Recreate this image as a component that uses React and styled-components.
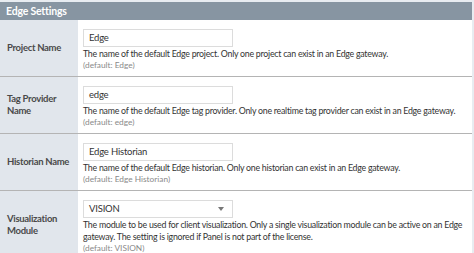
import React from "react";
import styled, { createGlobalStyle } from "styled-components";

const Global = createGlobalStyle`
  html, body { margin: 0; padding: 0; background: #e8ecf1; }
  body { font-family: Lato, "Liberation Sans", sans-serif; }
`;

const Panel = styled.div`
  width: 472px;
  margin-top: 2px;
  background: #fff;
`;

const Header = styled.div`
  height: 18px;
  background: #8795a2;
  color: #fff;
  font-weight: 700;
  font-size: 10.5px;
  line-height: 18px;
  padding-left: 6px;
  letter-spacing: -0.2px;
`;

const Row = styled.div`
  display: grid;
  grid-template-columns: 78px 1fr;
  border-top: ${(p) => (p.$first ? "none" : "1px solid #b4b4b4")};
`;

const Label = styled.div`
  background: #e1e6ec;
  display: flex;
  align-items: center;
  padding: 0 2px 0 7px;
  font-weight: 700;
  font-size: 9.5px;
  line-height: 12px;
  color: #4a4a4a;
  letter-spacing: -0.3px;
`;

const Cell = styled.div`
  padding: 9px 4px 5px 5px;
  display: flex;
  flex-direction: column;
`;

const Input = styled.div`
  box-sizing: border-box;
  width: 150px;
  height: 18px;
  border: 1px solid #dcdcdc;
  padding: 0 5px;
  font-size: 9.5px;
  line-height: 16px;
  color: #333;
  letter-spacing: -0.2px;
  display: flex;
  align-items: center;
  justify-content: space-between;
`;

const Caret = styled.span`
  width: 0;
  height: 0;
  border-left: 3px solid transparent;
  border-right: 3px solid transparent;
  border-top: 4px solid #777;
  margin-right: 3px;
`;

const Desc = styled.div`
  font-size: 8.8px;
  line-height: 12px;
  color: #333;
  letter-spacing: -0.25px;
  margin-top: 1px;
`;

const Default = styled.div`
  font-size: 8.3px;
  line-height: 11px;
  color: #8a8a8a;
`;

const rows = [
  {
    label: "Project Name",
    value: "Edge",
    desc: "The name of the default Edge project. Only one project can exist in an Edge gateway.",
    def: "Edge",
  },
  {
    label: "Tag Provider Name",
    value: "edge",
    desc: "The name of the default Edge tag provider. Only one realtime tag provider can exist in an Edge gateway.",
    def: "edge",
  },
  {
    label: "Historian Name",
    value: "Edge Historian",
    desc: "The name of the default Edge historian. Only one historian can exist in an Edge gateway.",
    def: "Edge Historian",
  },
  {
    label: "Visualization Module",
    value: "VISION",
    select: true,
    desc: "The module to be used for client visualization. Only a single visualization module can be active on an Edge gateway. The setting is ignored if Panel is not part of the license.",
    def: "VISION",
  },
];

export default function App() {
  return (
    <>
      <Global />
      <Panel>
        <Header>Edge Settings</Header>
        {rows.map((r, i) => (
          <Row key={r.label} $first={i === 0}>
            <Label>{r.label}</Label>
            <Cell>
              <Input>
                <span>{r.value}</span>
                {r.select && <Caret />}
              </Input>
              <Desc>{r.desc}</Desc>
              <Default>(default: {r.def})</Default>
            </Cell>
          </Row>
        ))}
      </Panel>
    </>
  );
}
